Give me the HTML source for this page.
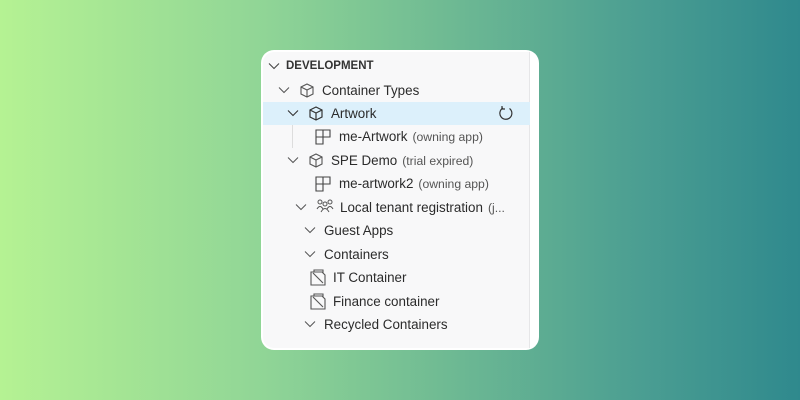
<!DOCTYPE html>
<html><head><meta charset="utf-8"><style>
*{margin:0;padding:0;box-sizing:border-box}
body{width:800px;height:400px;overflow:hidden;background:linear-gradient(90deg,#b5f293 0%,#90d596 33%,#70bb93 55%,#4b9e92 80%,#2f898d 100%);font-family:"Liberation Sans","DejaVu Sans",sans-serif;position:relative}
.card{position:absolute;left:261px;top:50px;width:278px;height:300px;background:#fff;border-radius:13px;overflow:hidden}
.panel{position:absolute;left:2px;top:2px;width:267px;height:296px;background:#f8f8f9;border-right:1px solid #e6e6e8;border-radius:11px 0 0 11px}
.row{position:absolute;left:0;height:23px;width:267px;font-size:13.4px;color:#2b2b2b;line-height:23px;white-space:nowrap}
.row span.s{font-size:12.2px;color:#555;margin-left:5px}
.row svg{position:absolute}
.t{position:absolute}
.hl{background:#dcf0fb}
</style></head><body>
<div class="card"><div class="panel">
<div class="row" style="top:3px"><svg style="left:5px;top:7px" width="12" height="8"><path d="M1 1.5l5 5 5-5" fill="none" stroke="#444" stroke-width="1.1"/></svg><span class="t" style="left:23px;font-weight:bold;font-size:11.5px;color:#333">DEVELOPMENT</span></div>
<div class="row" style="top:27px"><svg style="left:15px;top:7px" width="12" height="8"><path d="M1 1.5l5 5 5-5" fill="none" stroke="#555" stroke-width="1"/></svg><svg style="left:37px;top:4px" width="14" height="15"><path d="M7 1l6 3v7l-6 3-6-3V4z M1 4l6 3 6-3 M7 7v7" fill="none" stroke="#555" stroke-width="1.1"/></svg><span class="t" style="left:59px">Container Types</span></div>
<div class="row hl" style="top:50px"><svg style="left:24px;top:7px" width="12" height="8"><path d="M1 1.5l5 5 5-5" fill="none" stroke="#333" stroke-width="1.1"/></svg><svg style="left:46px;top:4px" width="14" height="15"><path d="M7 1l6 3v7l-6 3-6-3V4z M1 4l6 3 6-3 M7 7v7" fill="none" stroke="#333" stroke-width="1.2"/></svg><span class="t" style="left:68px">Artwork</span><svg style="left:235px;top:3px" width="16" height="16"><path d="M11.5 3.5A6 6 0 1 1 5 3" fill="none" stroke="#333" stroke-width="1.2"/><path d="M4 1v3h3" fill="none" stroke="#333" stroke-width="1.2"/></svg></div>
<div style="position:absolute;left:29px;top:73px;width:1px;height:23px;background:#ddd"></div>
<div class="row" style="top:73px"><svg style="left:52px;top:4px" width="16" height="16"><path d="M1 1h14v7H8v7H1z M1 8h7 M8 1v7" fill="none" stroke="#444" stroke-width="1.1"/></svg><span class="t" style="left:76px">me-Artwork<span class="s">(owning app)</span></span></div>
<div class="row" style="top:97px"><svg style="left:24px;top:7px" width="12" height="8"><path d="M1 1.5l5 5 5-5" fill="none" stroke="#555" stroke-width="1"/></svg><svg style="left:46px;top:4px" width="14" height="15"><path d="M7 1l6 3v7l-6 3-6-3V4z M1 4l6 3 6-3 M7 7v7" fill="none" stroke="#555" stroke-width="1.1"/></svg><span class="t" style="left:68px">SPE Demo<span class="s">(trial expired)</span></span></div>
<div class="row" style="top:120px"><svg style="left:52px;top:4px" width="16" height="16"><path d="M1 1h14v7H8v7H1z M1 8h7 M8 1v7" fill="none" stroke="#444" stroke-width="1.1"/></svg><span class="t" style="left:76px">me-artwork2<span class="s">(owning app)</span></span></div>
<div class="row" style="top:144px"><svg style="left:32px;top:7px" width="12" height="8"><path d="M1 1.5l5 5 5-5" fill="none" stroke="#555" stroke-width="1"/></svg><svg style="left:53px;top:3px" width="18" height="14"><circle cx="4" cy="3" r="2" fill="none" stroke="#555"/><circle cx="9" cy="5" r="2" fill="none" stroke="#555"/><circle cx="14" cy="3" r="2" fill="none" stroke="#555"/><path d="M1 10q3-5 6 0 M5 13q4-7 8 0 M11 10q3-5 6 0" fill="none" stroke="#555"/></svg><span class="t" style="left:77px">Local tenant registration<span class="s">(j...</span></span></div>
<div class="row" style="top:167px"><svg style="left:41px;top:7px" width="12" height="8"><path d="M1 1.5l5 5 5-5" fill="none" stroke="#555" stroke-width="1"/></svg><span class="t" style="left:61px">Guest Apps</span></div>
<div class="row" style="top:191px"><svg style="left:41px;top:7px" width="12" height="8"><path d="M1 1.5l5 5 5-5" fill="none" stroke="#555" stroke-width="1"/></svg><span class="t" style="left:61px">Containers</span></div>
<div class="row" style="top:214px"><svg style="left:47px;top:3px" width="16" height="17"><path d="M1 3h11l3 3v10H1z M4 3V1h9v3 M3 4l10 10" fill="none" stroke="#555" stroke-width="1.1"/></svg><span class="t" style="left:70px">IT Container</span></div>
<div class="row" style="top:238px"><svg style="left:47px;top:3px" width="16" height="17"><path d="M1 3h11l3 3v10H1z M4 3V1h9v3 M3 4l10 10" fill="none" stroke="#555" stroke-width="1.1"/></svg><span class="t" style="left:70px">Finance container</span></div>
<div class="row" style="top:261px"><svg style="left:41px;top:7px" width="12" height="8"><path d="M1 1.5l5 5 5-5" fill="none" stroke="#555" stroke-width="1"/></svg><span class="t" style="left:61px">Recycled Containers</span></div>
</div></div>
</body></html>
